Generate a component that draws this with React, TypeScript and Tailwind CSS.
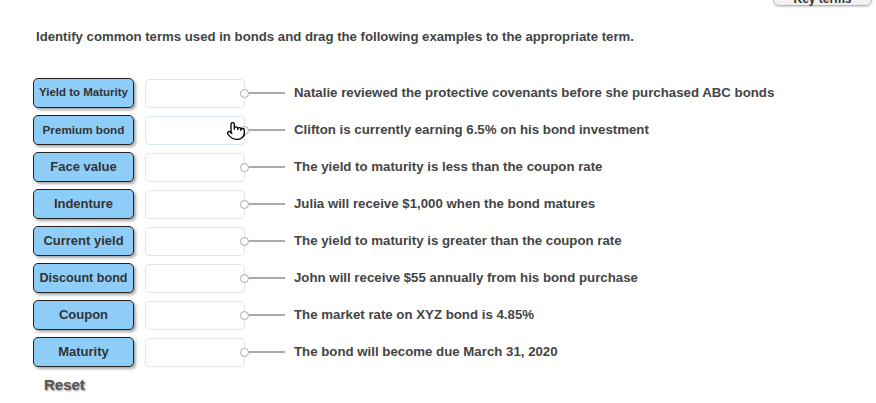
import { Pointer } from "lucide-react";

const rows = [
  { term: "Yield to Maturity", size: "text-[11.5px]", example: "Natalie reviewed the protective covenants before she purchased ABC bonds" },
  { term: "Premium bond", size: "text-[11.7px]", example: "Clifton is currently earning 6.5% on his bond investment", hover: true },
  { term: "Face value", size: "text-[13px]", example: "The yield to maturity is less than the coupon rate" },
  { term: "Indenture", size: "text-[13px]", example: "Julia will receive $1,000 when the bond matures" },
  { term: "Current yield", size: "text-[13px]", example: "The yield to maturity is greater than the coupon rate" },
  { term: "Discount bond", size: "text-[12.6px]", example: "John will receive $55 annually from his bond purchase" },
  { term: "Coupon", size: "text-[13px]", example: "The market rate on XYZ bond is 4.85%" },
  { term: "Maturity", size: "text-[13px]", example: "The bond will become due March 31, 2020" },
];

export default function App() {
  return (
    <div className="relative w-[876px] h-[403px] bg-white overflow-hidden font-['Liberation_Sans',Arial,sans-serif] text-[#444]">
      {/* Key terms button, scrolled mostly out of view */}
      <button className="absolute right-[4px] top-[-14px] w-[99px] h-[20px] rounded-[6px] border border-[#bbb] bg-gradient-to-b from-white to-[#eee] shadow-[0_1px_2px_rgba(0,0,0,0.2)] text-[12px] font-bold text-[#333] leading-[20px] pt-[2px]">
        Key terms
      </button>

      <p className="pl-[36px] pt-[29px] text-[13.2px] font-bold leading-[15px]">
        Identify common terms used in bonds and drag the following examples to the appropriate term.
      </p>

      <div className="flex flex-col gap-[7px] pl-[33px] pt-[34px]">
        {rows.map((row) => (
          <div key={row.term} className="flex items-center h-[30px]">
            <div
              className={`w-[101px] h-[30px] flex items-center justify-center rounded-[5px] border border-[#222] bg-[#8ecdf8] shadow-[2px_2px_3px_rgba(0,0,0,0.35)] font-bold text-[#333] whitespace-nowrap ${row.size}`}
            >
              {row.term}
            </div>
            <div
              className={`ml-[11px] w-[100px] h-[29px] rounded-[4px] border bg-white ${row.hover ? "border-[#d9e9f7]" : "border-[#e6e6e6]"}`}
            />
            <div className="ml-[-5px] w-[9px] h-[9px] rounded-full border-[1.5px] border-[#aaa] bg-white" />
            <div className="w-[36px] h-[2px] bg-[#aaa]" />
            <span className="ml-[9px] text-[13.25px] font-bold whitespace-nowrap">{row.example}</span>
          </div>
        ))}
      </div>

      <div className="pl-[44px] mt-[9px] text-[15px] font-bold leading-[18px] text-[#555] [text-shadow:1px_1px_2px_rgba(0,0,0,0.45)]">
        Reset
      </div>

      <Pointer className="absolute left-[226px] top-[121px] w-[20px] h-[20px] text-black fill-white" strokeWidth={1.6} />
    </div>
  );
}
